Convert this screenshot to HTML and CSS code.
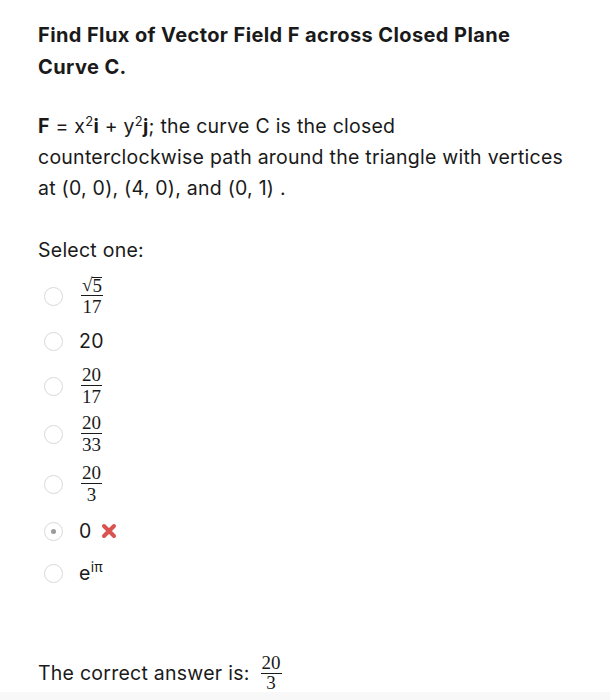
FILE: index.html
```html
<!DOCTYPE html>
<html>
<head>
<meta charset="utf-8">
<link rel="stylesheet" href="styles.css">
</head>
<body>
<div class="page">
  <h1 class="title">Find Flux of Vector Field F across Closed Plane Curve C.</h1>
  <p class="qtext"><b>F</b> = x<sup>2</sup><b>i</b> + y<sup>2</sup><b>j</b>; the curve C is the closed<br>counterclockwise path around the triangle with vertices at (0, 0), (4, 0), and (0, 1) .</p>
  <div class="prompt">Select one:</div>
  <div class="options">
    <div class="opt frac-row r1"><span class="radio"></span><span class="frac"><span class="num"><span class="rad">√</span><span class="ol">5</span></span><span class="den">17</span></span></div>
    <div class="opt r2"><span class="radio"></span><span class="lbl">20</span></div>
    <div class="opt frac-row r3"><span class="radio"></span><span class="frac"><span class="num">20</span><span class="den">17</span></span></div>
    <div class="opt frac-row r4"><span class="radio"></span><span class="frac"><span class="num">20</span><span class="den">33</span></span></div>
    <div class="opt frac-row r5"><span class="radio"></span><span class="frac"><span class="num">20</span><span class="den">3</span></span></div>
    <div class="opt r6"><span class="radio checked"></span><span class="lbl">0</span>
      <svg class="xicon" viewBox="0 0 16 16" width="16" height="16"><path d="M3 3 L13 13 M13 3 L3 13" stroke="#d9534f" stroke-width="4" stroke-linecap="round"/></svg>
    </div>
    <div class="opt r7"><span class="radio"></span><span class="lbl">e<sup class="esup">iπ</sup></span></div>
  </div>
  <div class="feedback">
    <span>The correct answer is:</span>
    <span class="frac fb-frac"><span class="num">20</span><span class="den">3</span></span>
  </div>
</div>
<div class="strip"></div>
</body>
</html>
```

FILE: styles.css
```css
html, body {
  margin: 0;
  padding: 0;
  background: #fff;
}
body {
  font-family: Inter, "Noto Sans", "Liberation Sans", sans-serif;
  color: #1a1a1a;
  font-size: 19.5px;
  letter-spacing: 0.25px;
  width: 610px;
  height: 700px;
  overflow: hidden;
  position: relative;
}
.page {
  padding: 19px 38px 0 38px;
}
.title {
  font-size: 20px;
  font-weight: 700;
  letter-spacing: 0.4px;
  line-height: 32px;
  margin: 0;
  width: 490px;
}
.qtext {
  margin: 28px 0 0 0;
  line-height: 31px;
  width: 545px;
}
.qtext sup {
  font-size: 13px;
  line-height: 0;
  vertical-align: 7px;
}
.prompt {
  margin-top: 31px;
  line-height: 31px;
}
.options {
  display: flex;
  flex-direction: column;
  margin-top: 6px;
}
.opt {
  display: flex;
  align-items: center;
  height: 42px;
}
.frac-row { height: 48px; }
.r1 { height: 48px; }
.r5 { height: 52px; }
.r6 { height: 42px; }
.radio {
  width: 19px;
  height: 19px;
  border: 1px solid #d9d9d9;
  border-radius: 50%;
  box-sizing: border-box;
  margin-left: 6px;
  margin-right: 16px;
  display: inline-flex;
  align-items: center;
  justify-content: center;
  background: #fff;
  flex: none;
}
.radio.checked::after {
  content: "";
  width: 5px;
  height: 5px;
  border-radius: 50%;
  background: #9a9a9a;
}
.lbl { line-height: 31px; }
.frac {
  display: inline-flex;
  flex-direction: column;
  align-items: center;
  font-family: "Liberation Serif", "Times New Roman", serif;
  font-size: 19px;
  letter-spacing: 0;
  line-height: 16px;
  padding: 0 2px;
}
.frac .num {
  border-bottom: 1px solid #1a1a1a;
  padding: 0 1px 2px 1px;
  display: flex;
  align-items: flex-end;
}
.frac .den {
  padding-top: 3px;
}
.fb-frac .den { padding-top: 1px; }
.rad { font-size: 19px; }
.ol { border-top: 1px solid #1a1a1a; line-height: 15px; }
.xicon {
  margin-left: 9px;
}
.esup {
  font-size: 14px;
  line-height: 0;
  vertical-align: 8px;
}
.feedback {
  display: flex;
  align-items: center;
  gap: 9px;
  margin-top: 61px;
  line-height: 31px;
}
.strip {
  position: absolute;
  left: 0;
  right: 0;
  top: 692px;
  height: 8px;
  background: #f8f8f8;
}
```
